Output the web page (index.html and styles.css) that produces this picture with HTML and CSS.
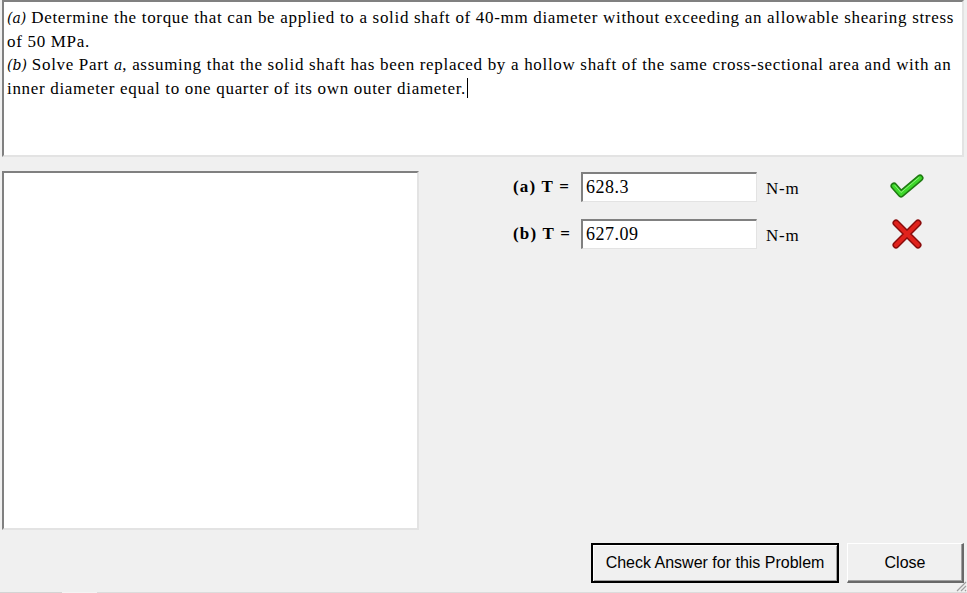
FILE: index.html
```html
<!DOCTYPE html>
<html>
<head>
<meta charset="utf-8">
<link rel="stylesheet" href="styles.css">
</head>
<body>
<div class="window">
  <div class="problem">
    <p class="ptext"><span class="pi">(a)</span> Determine the torque that can be applied to a solid shaft of 40-mm diameter without exceeding an allowable shearing stress<br>of 50 MPa.<br><span class="pi">(b)</span> Solve Part <span class="pi">a</span>, assuming that the solid shaft has been replaced by a hollow shaft of the same cross-sectional area and with an<br>inner diameter equal to one quarter of its own outer diameter.<span class="caret"></span></p>
  </div>
  <div class="middle">
    <div class="figure"></div>
    <div class="answers">
      <div class="row">
        <span class="label">(a) T =</span>
        <div class="field">628.3</div>
        <span class="unit">N-m</span>
        <svg class="mark" width="34" height="26" viewBox="0 0 34 26">
          <polyline points="4,12 11,20 30,4" fill="none" stroke="#1f7a12" stroke-width="7" stroke-linecap="round" stroke-linejoin="round"/>
          <polyline points="4,12 11,20 30,4" fill="none" stroke="#3dd82a" stroke-width="4" stroke-linecap="round" stroke-linejoin="round"/>
          <polyline points="5,11.5 11,18.5 29,3.5" fill="none" stroke="#8cf27a" stroke-width="1" stroke-linecap="round" stroke-linejoin="round"/>
        </svg>
      </div>
      <div class="row">
        <span class="label">(b) T =</span>
        <div class="field">627.09</div>
        <span class="unit">N-m</span>
        <svg class="mark" width="34" height="30" viewBox="0 0 34 30">
          <path d="M6 4 L28 26 M28 4 L6 26" fill="none" stroke="#8a0c0c" stroke-width="7" stroke-linecap="round"/>
          <path d="M6 4 L28 26 M28 4 L6 26" fill="none" stroke="#e0221c" stroke-width="4" stroke-linecap="round"/>
        </svg>
      </div>
    </div>
  </div>
  <div class="buttons">
    <button class="btn default">Check Answer for this Problem</button>
    <button class="btn close">Close</button>
  </div>
  <div class="statusline">
    <span class="seg s1"></span><span class="seg s2"></span><span class="seg s3"></span>
    <svg class="grip" width="12" height="12" viewBox="0 0 12 12">
      <path d="M11 2 L2 11 M11 6 L6 11 M11 10 L10 11" stroke="#a0a0a0" stroke-width="1.2"/>
    </svg>
  </div>
</div>
</body>
</html>
```

FILE: styles.css
```css
html, body {
  margin: 0;
  padding: 0;
}
body {
  background: #f0f0f0;
  width: 967px;
  height: 593px;
  overflow: hidden;
}
.window {
  width: 967px;
  height: 593px;
  display: flex;
  flex-direction: column;
  position: relative;
}
.problem {
  margin: 0 3px 0 2px;
  background: #ffffff;
  border-top: 2px solid #808080;
  border-left: 2px solid #808080;
  border-right: 2px solid #e3e3e3;
  border-bottom: 2px solid #e3e3e3;
  padding: 4px 0 0 3px;
  box-sizing: border-box;
  height: 157px;
  overflow: hidden;
}
.ptext {
  margin: 0;
  font-family: "Liberation Serif", "Times New Roman", serif;
  font-size: 17px;
  letter-spacing: 0.68px;
  line-height: 23px;
  color: #000;
  white-space: nowrap;
}
.pi {
  font-style: italic;
  font-family: "DejaVu Serif", "Liberation Serif", serif;
  font-size: 14px;
  letter-spacing: 0;
}
.caret {
  display: inline-block;
  width: 1px;
  height: 20px;
  background: #000;
  vertical-align: -4px;
  margin-left: 1px;
}
.middle {
  display: flex;
  margin-top: 14px;
  height: 360px;
}
.figure {
  margin-left: 2px;
  width: 417px;
  height: 359px;
  box-sizing: border-box;
  background: #fff;
  border-top: 2px solid #808080;
  border-left: 2px solid #808080;
  border-right: 2px solid #e3e3e3;
  border-bottom: 2px solid #e3e3e3;
}
.answers {
  display: flex;
  flex-direction: column;
  gap: 17px;
  margin-left: 94px;
  margin-top: 1px;
}
.row {
  display: flex;
  align-items: center;
  height: 30px;
  font-family: "Liberation Serif", "Times New Roman", serif;
  font-size: 17px;
}
.label {
  font-weight: bold;
  width: 68px;
  white-space: pre;
  letter-spacing: 1.2px;
}
.field {
  width: 176px;
  height: 30px;
  box-sizing: border-box;
  background: #fff;
  border-top: 2px solid #808080;
  border-left: 2px solid #808080;
  border-right: 1px solid #e3e3e3;
  border-bottom: 1px solid #e3e3e3;
  padding: 2px 0 0 3px;
  font-size: 18px;
  line-height: 22px;
  letter-spacing: 0.5px;
}
.unit {
  margin-left: 9px;
  margin-top: 4px;
  width: 124px;
  letter-spacing: 0.8px;
}
.mark {
  display: block;
}
.buttons {
  display: flex;
  gap: 8px;
  margin-left: 591px;
  margin-top: 12px;
}
.btn {
  font-family: "Liberation Sans", Arial, sans-serif;
  font-size: 16px;
  color: #000;
  height: 40px;
  box-sizing: border-box;
  background: #f0f0f0;
  border-top: 1px solid #ffffff;
  border-left: 1px solid #ffffff;
  border-right: 2px solid #696969;
  border-bottom: 2px solid #696969;
  padding: 0;
  letter-spacing: 0;
}
.btn.default {
  width: 248px;
  border: 2px solid #000;
  box-shadow: inset 1px 1px 0 #fff, inset -1px -1px 0 #a0a0a0;
}
.btn.close {
  width: 117px;
  box-shadow: inset -1px -1px 0 #a0a0a0;
}
.statusline {
  position: absolute;
  left: 0;
  right: 0;
  bottom: 0;
  height: 1px;
  display: flex;
}
.seg {
  height: 1px;
}
.s1 { width: 62px; background: #d4d4d4; }
.s2 { width: 35px; background: #f4f4f4; }
.s3 { flex: 1; background: #dcdcdc; }
.grip {
  position: absolute;
  right: 0;
  bottom: 1px;
}
```
